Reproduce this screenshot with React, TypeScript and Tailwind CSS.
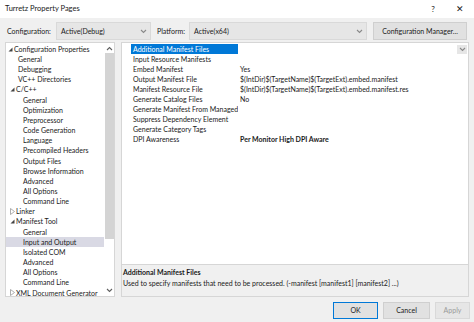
import React from 'react';

const font = { fontFamily: 'Lato, "Noto Sans", sans-serif' };

// tree rows: level, label, expander
const treeRows: Array<{ level: number; label: string; exp?: 'open' | 'closed'; selected?: boolean }> = [
  { level: 0, label: 'Configuration Properties', exp: 'open' },
  { level: 1, label: 'General' },
  { level: 1, label: 'Debugging' },
  { level: 1, label: 'VC++ Directories' },
  { level: 1, label: 'C/C++', exp: 'open' },
  { level: 2, label: 'General' },
  { level: 2, label: 'Optimization' },
  { level: 2, label: 'Preprocessor' },
  { level: 2, label: 'Code Generation' },
  { level: 2, label: 'Language' },
  { level: 2, label: 'Precompiled Headers' },
  { level: 2, label: 'Output Files' },
  { level: 2, label: 'Browse Information' },
  { level: 2, label: 'Advanced' },
  { level: 2, label: 'All Options' },
  { level: 2, label: 'Command Line' },
  { level: 1, label: 'Linker', exp: 'closed' },
  { level: 1, label: 'Manifest Tool', exp: 'open' },
  { level: 2, label: 'General' },
  { level: 2, label: 'Input and Output', selected: true },
  { level: 2, label: 'Isolated COM' },
  { level: 2, label: 'Advanced' },
  { level: 2, label: 'All Options' },
  { level: 2, label: 'Command Line' },
  { level: 1, label: 'XML Document Generator', exp: 'closed' },
];

const props: Array<{ name: string; value?: string; bold?: boolean }> = [
  { name: 'Additional Manifest Files' },
  { name: 'Input Resource Manifests' },
  { name: 'Embed Manifest', value: 'Yes' },
  { name: 'Output Manifest File', value: '$(IntDir)$(TargetName)$(TargetExt).embed.manifest' },
  { name: 'Manifest Resource File', value: '$(IntDir)$(TargetName)$(TargetExt).embed.manifest.res' },
  { name: 'Generate Catalog Files', value: 'No' },
  { name: 'Generate Manifest From ManagedAssembly' },
  { name: 'Suppress Dependency Element' },
  { name: 'Generate Category Tags' },
  { name: 'DPI Awareness', value: 'Per Monitor High DPI Aware', bold: true },
];

const Chevron = ({ up = false, className = '' }: { up?: boolean; className?: string }) => (
  <svg width="7" height="5" viewBox="0 0 7 5" className={className}>
    <path d={up ? 'M1 4 L3.5 1.5 L6 4' : 'M1 1 L3.5 3.5 L6 1'} fill="none" stroke="currentColor" strokeWidth="1.1" />
  </svg>
);

const Expander = ({ open }: { open: boolean }) =>
  open ? (
    <svg width="5" height="5" viewBox="0 0 5 5" className="shrink-0">
      <path d="M4.5 0.5 L4.5 4.5 L0.5 4.5 Z" fill="#444" />
    </svg>
  ) : (
    <svg width="5" height="7" viewBox="0 0 5 7" className="shrink-0">
      <path d="M0.5 0.5 L4.5 3.5 L0.5 6.5 Z" fill="none" stroke="#9a9a9a" strokeWidth="0.8" />
    </svg>
  );

const Combo = ({ text, className = '' }: { text: string; className?: string }) => (
  <div className={`h-[18px] flex items-center justify-between bg-[#e6e6e6] border border-[#d9d9d9] pl-[4px] pr-[3px] ${className}`}>
    <span>{text}</span>
    <Chevron className="text-[#8a8a8a]" />
  </div>
);

export default function App() {
  return (
    <div className="w-[474px] h-[322px] bg-[#f0f0f0] text-[7px] text-[#1a1a1a] flex flex-col overflow-hidden" style={font}>
      {/* title bar */}
      <div className="h-[18px] bg-white flex items-center pl-[5px] pr-[8px] shrink-0">
        <span className="flex-1 text-[7.5px]">Turretz Property Pages</span>
        <span className="w-[12px] text-center text-[8px] mr-[15px]">?</span>
        <span className="w-[12px] text-center text-[9px]">✕</span>
      </div>

      {/* configuration bar */}
      <div className="h-[18px] mt-[4px] flex items-center pl-[7px] pr-[7px] shrink-0">
        <span className="w-[49px]">Configuration:</span>
        <Combo text="Active(Debug)" className="w-[95px]" />
        <span className="w-[32px] ml-[6px]">Platform:</span>
        <Combo text="Active(x64)" className="w-[178px]" />
        <div className="ml-[6px] h-[18px] flex-1 flex items-center justify-center bg-[#e1e1e1] border border-[#cfcfcf]">
          Configuration Manager...
        </div>
      </div>

      {/* main area */}
      <div className="flex mt-[2px] px-[5px] gap-[6px] h-[255px] shrink-0">
        {/* tree */}
        <div className="w-[110px] bg-white border border-[#d6d6d6] flex">
          <div className="flex-1 pt-[1px] overflow-hidden">
            {treeRows.map((r, i) => {
              const pad = r.level === 0 ? 2 : r.exp ? 4 : r.level === 1 ? 12 : 17;
              return (
                <div
                  key={i}
                  className={`h-[10.17px] flex items-center whitespace-nowrap ${r.selected ? 'bg-[#d9d9e4]' : ''}`}
                  style={{ paddingLeft: pad }}
                >
                  {r.exp && (
                    <span className="w-[6px] flex items-center">
                      <Expander open={r.exp === 'open'} />
                    </span>
                  )}
                  <span>{r.label}</span>
                </div>
              );
            })}
          </div>
          {/* scrollbar */}
          <div className="w-[10px] flex flex-col items-center bg-white">
            <div className="h-[10px] flex items-center justify-center text-[#606060]">
              <Chevron up />
            </div>
            <div className="w-[9px] h-[186px] bg-[#d4d4d4]" />
            <div className="flex-1" />
            <div className="h-[12px] flex items-center justify-center text-[#606060]">
              <Chevron />
            </div>
          </div>
        </div>

        {/* property grid + description */}
        <div className="flex-1 flex flex-col">
          <div className="flex-1 bg-white border border-[#d6d6d6] pt-[1px] pl-[9px] pr-[1px]">
            {props.map((p, i) => (
              <div key={i} className="h-[10px] flex items-center whitespace-nowrap">
                <div
                  className={`w-[107px] h-full flex items-center pl-[2px] overflow-hidden ${i === 0 ? 'bg-[#0078d7] text-white' : ''}`}
                >
                  {p.name}
                </div>
                <div className={`flex-1 pl-[2px] flex items-center justify-between h-full ${p.bold ? 'font-bold' : ''}`}>
                  <span>{p.value}</span>
                  {i === 0 && (
                    <span className="w-[10px] h-[9px] bg-[#e6e6e6] flex items-center justify-center text-[#8a8a8a]">
                      <Chevron />
                    </span>
                  )}
                </div>
              </div>
            ))}
          </div>
          <div className="h-[32px] border border-t-0 border-[#d6d6d6] bg-[#f0f0f0] pl-[1px] pt-[2px]">
            <div className="font-bold leading-[11px]">Additional Manifest Files</div>
            <div className="leading-[11px]">Used to specify manifests that need to be processed. (-manifest [manifest1] [manifest2] ...)</div>
          </div>
        </div>
      </div>

      {/* buttons */}
      <div className="flex justify-end gap-[5px] pr-[4px] mt-[5px]">
        <div className="w-[45px] h-[17px] flex items-center justify-center bg-[#e1e1e1] border border-[#0078d7]">OK</div>
        <div className="w-[47px] h-[17px] flex items-center justify-center bg-[#e1e1e1] border border-[#cfcfcf]">Cancel</div>
        <div className="w-[35px] h-[17px] flex items-center justify-center bg-[#e6e6e6] border border-[#d9d9d9] text-[#9a9a9a]">Apply</div>
      </div>
    </div>
  );
}
